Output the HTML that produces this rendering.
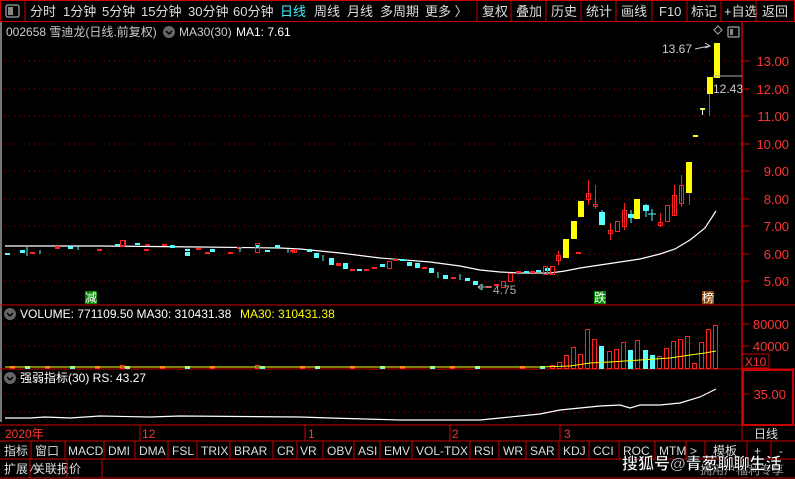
<!DOCTYPE html>
<html><head><meta charset="utf-8"><style>
body{margin:0;width:795px;height:479px;background:#000;overflow:hidden;font-family:"Liberation Sans","Noto Sans CJK SC",sans-serif;position:relative}
.t{position:absolute;white-space:nowrap;font-size:12px}
</style></head><body>
<svg width="795" height="479" style="position:absolute;left:0;top:0" font-family="Liberation Sans, Noto Sans CJK SC, sans-serif">
<!-- top bar -->
<rect x="0.5" y="0.5" width="794" height="21" fill="none" stroke="#c00" />
<line x1="25" y1="0" x2="25" y2="22" stroke="#c00"/>
<rect x="6" y="5" width="13" height="12" rx="2" fill="none" stroke="#888" stroke-width="1.5"/><rect x="8" y="7" width="5" height="8" fill="#888"/>
<g fill="#ddd" font-size="13">
<text x="30" y="16">分时</text><text x="63" y="16">1分钟</text><text x="102" y="16">5分钟</text><text x="141" y="16">15分钟</text><text x="188" y="16">30分钟</text><text x="233" y="16">60分钟</text>
<text x="280" y="16" fill="#4ef">日线</text><text x="314" y="16">周线</text><text x="347" y="16">月线</text><text x="380" y="16">多周期</text><text x="425" y="16">更多 〉</text>
<text x="482" y="16">复权</text><text x="516" y="16">叠加</text><text x="551" y="16">历史</text><text x="586" y="16">统计</text><text x="621" y="16">画线</text><text x="659" y="16">F10</text><text x="691" y="16">标记</text><text x="724" y="16">+自选</text><text x="762" y="16">返回</text>
</g>
<g stroke="#c00"><line x1="477" y1="0" x2="477" y2="22"/><line x1="511" y1="0" x2="511" y2="22"/><line x1="546" y1="0" x2="546" y2="22"/><line x1="581" y1="0" x2="581" y2="22"/><line x1="616" y1="0" x2="616" y2="22"/><line x1="652" y1="0" x2="652" y2="22"/><line x1="687" y1="0" x2="687" y2="22"/><line x1="721" y1="0" x2="721" y2="22"/><line x1="756" y1="0" x2="756" y2="22"/></g>
<rect x="0" y="22" width="2" height="400" fill="#777"/>
<!-- main header -->
<text x="6" y="36" font-size="12" fill="#ccc">002658 雪迪龙(日线.前复权)</text>
<circle cx="169" cy="32" r="6" fill="#666"/><path d="M166 31l3 3 3-3" stroke="#000" fill="none" stroke-width="1.5"/>
<text x="179" y="36" font-size="12" fill="#ccc">MA30(30)</text><text x="236" y="36" font-size="12" fill="#fff">MA1: 7.61</text>
<path d="M714 30l4-4 4 4-4 4z" fill="none" stroke="#aaa"/><rect x="728" y="27" width="11" height="10" rx="1" fill="none" stroke="#888" stroke-width="1.5"/><rect x="730" y="29" width="3" height="6" fill="#888"/>
<!-- grid -->
<g stroke="#a00" stroke-dasharray="1,4">
<line x1="4" y1="61" x2="742" y2="61"/><line x1="4" y1="89" x2="742" y2="89"/><line x1="4" y1="116" x2="742" y2="116"/><line x1="4" y1="144" x2="742" y2="144"/><line x1="4" y1="171" x2="742" y2="171"/><line x1="4" y1="199" x2="742" y2="199"/><line x1="4" y1="226" x2="742" y2="226"/><line x1="4" y1="254" x2="742" y2="254"/><line x1="4" y1="281" x2="742" y2="281"/>
<line x1="4" y1="346" x2="742" y2="346"/><line x1="4" y1="324" x2="742" y2="324"/><line x1="4" y1="394" x2="742" y2="394"/><line x1="4" y1="412" x2="742" y2="412"/>
</g>
<!-- axis -->
<line x1="742" y1="22" x2="742" y2="425" stroke="#c00" stroke-width="1.5"/>
<g stroke="#c00"><line x1="742" y1="61" x2="750" y2="61"/><line x1="742" y1="89" x2="750" y2="89"/><line x1="742" y1="116" x2="750" y2="116"/><line x1="742" y1="144" x2="750" y2="144"/><line x1="742" y1="171" x2="750" y2="171"/><line x1="742" y1="199" x2="750" y2="199"/><line x1="742" y1="226" x2="750" y2="226"/><line x1="742" y1="254" x2="750" y2="254"/><line x1="742" y1="281" x2="750" y2="281"/>
<line x1="742" y1="324" x2="750" y2="324"/><line x1="742" y1="346" x2="750" y2="346"/><line x1="742" y1="394" x2="750" y2="394"/>
<line x1="0" y1="305" x2="795" y2="305"/><line x1="0" y1="369" x2="795" y2="369"/><line x1="0" y1="425" x2="795" y2="425"/></g>
<g fill="#f33" font-size="13" text-anchor="end">
<text x="789" y="66">13.00</text><text x="789" y="94">12.00</text><text x="789" y="121">11.00</text><text x="789" y="149">10.00</text><text x="789" y="176">9.00</text><text x="789" y="204">8.00</text><text x="789" y="231">7.00</text><text x="789" y="259">6.00</text><text x="789" y="286">5.00</text>
<text x="789" y="329">80000</text><text x="789" y="351">40000</text><text x="786" y="399">35.00</text></g>
<rect x="742" y="354" width="27" height="14" fill="none" stroke="#c00"/><text x="745" y="366" font-size="12" fill="#f33">X10</text>
<rect x="743" y="370" width="50" height="55" fill="none" stroke="#c00" stroke-width="2"/>
<!-- MA line -->
<polyline fill="none" stroke="#fff" stroke-width="1.2" points="5,246 100,246 200,247 280,248 300,249 340,253 380,258 430,262 460,266 480,270 500,272 520,273 550,273 565,271 580,268 600,265 620,262 640,259 660,254 675,249 690,240 705,228 716,211"/>
<!-- left/middle candles -->
<g fill="#f22"><rect x="30" y="252" width="5" height="2"/><rect x="55" y="246" width="5" height="3"/><rect x="97" y="249" width="5" height="2"/><rect x="145" y="244" width="5" height="2"/><rect x="162" y="244" width="5" height="2"/><rect x="196" y="248" width="5" height="2"/><rect x="237" y="247" width="5" height="2"/><rect x="290" y="250" width="5" height="2"/><rect x="336" y="263" width="5" height="3"/><rect x="350" y="269" width="5" height="2"/><rect x="364" y="269" width="5" height="2"/><rect x="372" y="267" width="5" height="2"/><rect x="393" y="259" width="5" height="2"/><rect x="422" y="267" width="5" height="2"/><rect x="451" y="277" width="5" height="2"/><rect x="486" y="286" width="5" height="2"/><rect x="494" y="284" width="5" height="2"/><rect x="516" y="271" width="5" height="2"/><rect x="530" y="271" width="5" height="2"/><rect x="576" y="252" width="5" height="2"/><rect x="228" y="252" width="5" height="2"/><rect x="144" y="249" width="5" height="2"/><rect x="205" y="252" width="5" height="2"/></g>
<g fill="#5ff"><rect x="5" y="253" width="5" height="2"/><rect x="20" y="250" width="5" height="3"/><rect x="68" y="246" width="5" height="3"/><rect x="115" y="244" width="5" height="2"/><rect x="170" y="245" width="5" height="3"/><rect x="185" y="252" width="5" height="4"/><rect x="210" y="249" width="5" height="3"/><rect x="255" y="245" width="5" height="2"/><rect x="275" y="245" width="5" height="3"/><rect x="307" y="249" width="5" height="3"/><rect x="314" y="253" width="5" height="5"/><rect x="329" y="258" width="5" height="7"/><rect x="343" y="263" width="5" height="6"/><rect x="357" y="269" width="5" height="2"/><rect x="380" y="264" width="5" height="3"/><rect x="400" y="259" width="5" height="2"/><rect x="407" y="262" width="5" height="4"/><rect x="415" y="263" width="5" height="5"/><rect x="429" y="268" width="5" height="5"/><rect x="443" y="275" width="5" height="4"/><rect x="465" y="278" width="5" height="3"/><rect x="473" y="281" width="5" height="4"/><rect x="524" y="271" width="5" height="2"/><rect x="536" y="270" width="5" height="2"/><rect x="545" y="268" width="5" height="3"/><rect x="185" y="249" width="5" height="2"/><rect x="265" y="250" width="5" height="2"/><rect x="135" y="243" width="5" height="2"/></g>
<g stroke="#5ff"><line x1="27" y1="247" x2="27" y2="256"/><line x1="40" y1="250" x2="40" y2="254"/><line x1="78" y1="245" x2="78" y2="250"/><line x1="125" y1="240" x2="125" y2="245"/><line x1="240" y1="247" x2="240" y2="252"/><line x1="288" y1="249" x2="288" y2="253"/><line x1="323" y1="255" x2="323" y2="261"/><line x1="438" y1="272" x2="438" y2="278"/><line x1="460" y1="274" x2="460" y2="280"/><line x1="482" y1="284" x2="482" y2="290"/></g>
<g fill="none" stroke="#f22"><rect x="120.5" y="240.5" width="4" height="6"/><rect x="255.5" y="243.5" width="4" height="9"/><rect x="292.5" y="249.5" width="4" height="3"/><rect x="387.5" y="261.5" width="4" height="7"/><rect x="501.5" y="281.5" width="4" height="6"/><rect x="508.5" y="273.5" width="4" height="8"/><rect x="543.5" y="266.5" width="4" height="8"/>
<rect x="550.5" y="266.5" width="4" height="8"/><rect x="556.5" y="255.5" width="4" height="5"/><line x1="558.5" y1="251" x2="558.5" y2="265"/>
<rect x="586.5" y="193.5" width="4" height="6"/><line x1="588.5" y1="180" x2="588.5" y2="205"/><rect x="593.5" y="204.5" width="4" height="2"/><line x1="595.5" y1="185" x2="595.5" y2="209"/>
<rect x="608.5" y="230.5" width="4" height="3"/><line x1="610.5" y1="223" x2="610.5" y2="240"/><rect x="615.5" y="221.5" width="4" height="10"/><rect x="622.5" y="210.5" width="4" height="16"/><line x1="624.5" y1="203" x2="624.5" y2="230"/>
<rect x="658.5" y="222.5" width="4" height="3"/><line x1="660.5" y1="213" x2="660.5" y2="227"/><rect x="665.5" y="205.5" width="4" height="16"/><rect x="672.5" y="195.5" width="4" height="20"/><line x1="674.5" y1="185" x2="674.5" y2="216"/><rect x="679.5" y="185.5" width="4" height="18"/><line x1="681.5" y1="175" x2="681.5" y2="207"/><line x1="689.5" y1="190" x2="689.5" y2="205"/><line x1="709.5" y1="90" x2="709.5" y2="116"/></g>
<g fill="#ff0"><rect x="563" y="239" width="6" height="19"/><rect x="571" y="221" width="6" height="18"/><rect x="578" y="201" width="6" height="16"/><rect x="634" y="199" width="6" height="20"/><rect x="686" y="162" width="6" height="31"/><rect x="693" y="135" width="5" height="2"/><rect x="700" y="108" width="5" height="2"/><rect x="707" y="77" width="6" height="17"/><rect x="714" y="43" width="6" height="35"/></g>
<line x1="702.5" y1="108" x2="702.5" y2="115" stroke="#fff"/>
<g fill="#5ff"><rect x="599" y="212" width="6" height="13"/><rect x="628" y="214" width="6" height="4"/><rect x="643" y="205" width="6" height="6"/></g>
<g stroke="#5ff"><line x1="631" y1="210" x2="631" y2="223"/><line x1="646" y1="204" x2="646" y2="217"/><line x1="652" y1="209" x2="652" y2="221"/><line x1="648" y1="214" x2="656" y2="214"/><line x1="602" y1="210" x2="602" y2="212"/></g>
<!-- price annotations -->
<text x="662" y="53" font-size="12" fill="#ccc">13.67</text><path d="M695 49l14-3M705 43l5 3-5 2" stroke="#ccc" fill="none"/>
<path d="M713 76h29" stroke="#aaa"/><text x="713" y="93" font-size="12" fill="#ccc">12.43</text>
<text x="493" y="294" font-size="12" fill="#aaa">4.75</text><path d="M478 287h14M482 284l-4 3 4 3" stroke="#aaa" fill="none"/>
<rect x="85" y="291" width="12" height="13" fill="#080"/><text x="85" y="302" font-size="12" fill="#fff">减</text>
<rect x="594" y="291" width="12" height="13" fill="#080"/><text x="594" y="302" font-size="12" fill="#fff">跌</text>
<rect x="702" y="291" width="12" height="13" fill="#840"/><text x="702" y="302" font-size="12" fill="#fff">榜</text>
<!-- volume -->
<circle cx="10" cy="314" r="6" fill="#666"/><path d="M7 313l3 3 3-3" stroke="#000" fill="none" stroke-width="1.5"/>
<text x="20" y="318" font-size="12" fill="#fff">VOLUME: 771109.50  MA30: 310431.38</text><text x="240" y="318" font-size="12" fill="#ff0">MA30: 310431.38</text>
<g fill="#f22"><rect x="10" y="366" width="5" height="3"/><rect x="45" y="366" width="5" height="3"/><rect x="95" y="366" width="5" height="3"/><rect x="160" y="366" width="5" height="3"/><rect x="210" y="366" width="5" height="3"/><rect x="300" y="366" width="5" height="3"/><rect x="350" y="366" width="5" height="3"/><rect x="400" y="366" width="5" height="3"/><rect x="450" y="366" width="5" height="3"/><rect x="520" y="366" width="5" height="3"/></g>
<g fill="#5ff"><rect x="25" y="366" width="5" height="3"/><rect x="70" y="366" width="5" height="3"/><rect x="125" y="366" width="5" height="3"/><rect x="185" y="366" width="5" height="3"/><rect x="260" y="366" width="5" height="3"/><rect x="315" y="366" width="5" height="3"/><rect x="380" y="366" width="5" height="3"/><rect x="430" y="366" width="5" height="3"/><rect x="475" y="366" width="5" height="3"/><rect x="540" y="366" width="5" height="3"/>
<rect x="599" y="346" width="5" height="23"/><rect x="628" y="350" width="5" height="19"/><rect x="643" y="350" width="5" height="19"/><rect x="650" y="355" width="5" height="14"/></g>
<g fill="none" stroke="#f22"><rect x="120.5" y="365.5" width="4" height="3"/><rect x="255.5" y="365.5" width="4" height="3"/><rect x="550.5" y="365.5" width="4" height="3"/><rect x="557.5" y="362.5" width="4" height="6"/><rect x="564.5" y="355.5" width="4" height="13"/><rect x="571.5" y="347.5" width="4" height="21"/><rect x="578.5" y="354.5" width="4" height="14"/><rect x="585.5" y="329.5" width="4" height="39"/><rect x="592.5" y="339.5" width="4" height="29"/><rect x="607.5" y="351.5" width="4" height="17"/><rect x="614.5" y="349.5" width="4" height="19"/><rect x="621.5" y="342.5" width="4" height="26"/><rect x="635.5" y="340.5" width="4" height="28"/><rect x="657.5" y="356.5" width="4" height="12"/><rect x="664.5" y="348.5" width="4" height="20"/><rect x="671.5" y="341.5" width="4" height="27"/><rect x="678.5" y="339.5" width="4" height="29"/><rect x="685.5" y="336.5" width="4" height="32"/><rect x="692.5" y="363.5" width="4" height="5"/><rect x="699.5" y="342.5" width="4" height="26"/><rect x="706.5" y="329.5" width="4" height="39"/><rect x="713.5" y="325.5" width="4" height="43"/></g>
<polyline fill="none" stroke="#ff0" points="5,367 540,367 570,366 590,363 610,362 640,360 670,358 690,355 705,353 716,351"/>
<!-- RSI -->
<circle cx="10" cy="378" r="6" fill="#666"/><path d="M7 377l3 3 3-3" stroke="#000" fill="none" stroke-width="1.5"/>
<text x="20" y="382" font-size="12" fill="#fff">强弱指标(30)  RS: 43.27</text>
<polyline fill="none" stroke="#fff" stroke-width="1.2" points="5,418 30,418 45,417 70,418 100,416 150,417 180,416 300,417 330,418 400,420 480,420 500,418 520,416 540,414 560,410 580,408 600,406 620,405 630,408 640,405 660,405 680,403 700,397 716,389"/>
<!-- time axis -->
<text x="5" y="438" font-size="12" fill="#f33">2020年</text><text x="142" y="438" font-size="12" fill="#f33">12</text><text x="308" y="438" font-size="12" fill="#f33">1</text><text x="452" y="438" font-size="12" fill="#f33">2</text><text x="564" y="438" font-size="12" fill="#f33">3</text>
<g stroke="#c00"><line x1="140" y1="425" x2="140" y2="441"/><line x1="305" y1="425" x2="305" y2="441"/><line x1="450" y1="425" x2="450" y2="441"/><line x1="560" y1="425" x2="560" y2="441"/><line x1="742" y1="425" x2="742" y2="441"/>
<line x1="0" y1="441" x2="795" y2="441"/><line x1="0" y1="459" x2="795" y2="459"/><line x1="0" y1="478" x2="795" y2="478"/></g>
<text x="754" y="438" font-size="12" fill="#ddd">日线</text>
<!-- buttons -->
<g fill="#ddd" font-size="12">
<text x="4" y="455">指标</text><text x="35" y="455">窗口</text><text x="68" y="455">MACD</text><text x="108" y="455">DMI</text><text x="139" y="455">DMA</text><text x="172" y="455">FSL</text><text x="201" y="455">TRIX</text><text x="234" y="455">BRAR</text><text x="277" y="455">CR</text><text x="300" y="455">VR</text><text x="327" y="455">OBV</text><text x="358" y="455">ASI</text><text x="384" y="455">EMV</text><text x="416" y="455">VOL-TDX</text><text x="474" y="455">RSI</text><text x="503" y="455">WR</text><text x="530" y="455">SAR</text><text x="563" y="455">KDJ</text><text x="593" y="455">CCI</text><text x="623" y="455">ROC</text><text x="659" y="455">MTM</text><text x="690" y="455">&gt;</text><text x="713" y="455">模板</text><text x="754" y="455">+</text><text x="779" y="455">-</text>
<text x="4" y="473">扩展∧</text><text x="33" y="473">关联报价</text></g>
<g stroke="#c00"><line x1="31" y1="441" x2="31" y2="459"/><line x1="65" y1="441" x2="65" y2="459"/><line x1="104" y1="441" x2="104" y2="459"/><line x1="135" y1="441" x2="135" y2="459"/><line x1="168" y1="441" x2="168" y2="459"/><line x1="197" y1="441" x2="197" y2="459"/><line x1="230" y1="441" x2="230" y2="459"/><line x1="273" y1="441" x2="273" y2="459"/><line x1="297" y1="441" x2="297" y2="459"/><line x1="323" y1="441" x2="323" y2="459"/><line x1="354" y1="441" x2="354" y2="459"/><line x1="380" y1="441" x2="380" y2="459"/><line x1="412" y1="441" x2="412" y2="459"/><line x1="470" y1="441" x2="470" y2="459"/><line x1="499" y1="441" x2="499" y2="459"/><line x1="526" y1="441" x2="526" y2="459"/><line x1="559" y1="441" x2="559" y2="459"/><line x1="589" y1="441" x2="589" y2="459"/><line x1="619" y1="441" x2="619" y2="459"/><line x1="655" y1="441" x2="655" y2="459"/><line x1="686" y1="441" x2="686" y2="459"/><line x1="705" y1="441" x2="705" y2="459"/><line x1="747" y1="441" x2="747" y2="459"/><line x1="771" y1="441" x2="771" y2="459"/>
<line x1="30" y1="459" x2="30" y2="478"/><line x1="67" y1="459" x2="67" y2="478"/><line x1="102" y1="459" x2="102" y2="478"/></g>
<text x="700" y="474" font-size="12" fill="#999">拥用户福利专享</text>
<text x="622" y="469" font-size="16" font-weight="bold" fill="#fff" stroke="#000" stroke-width="0.5">搜狐号@青葱聊聊生活</text>
</svg>
</body></html>
